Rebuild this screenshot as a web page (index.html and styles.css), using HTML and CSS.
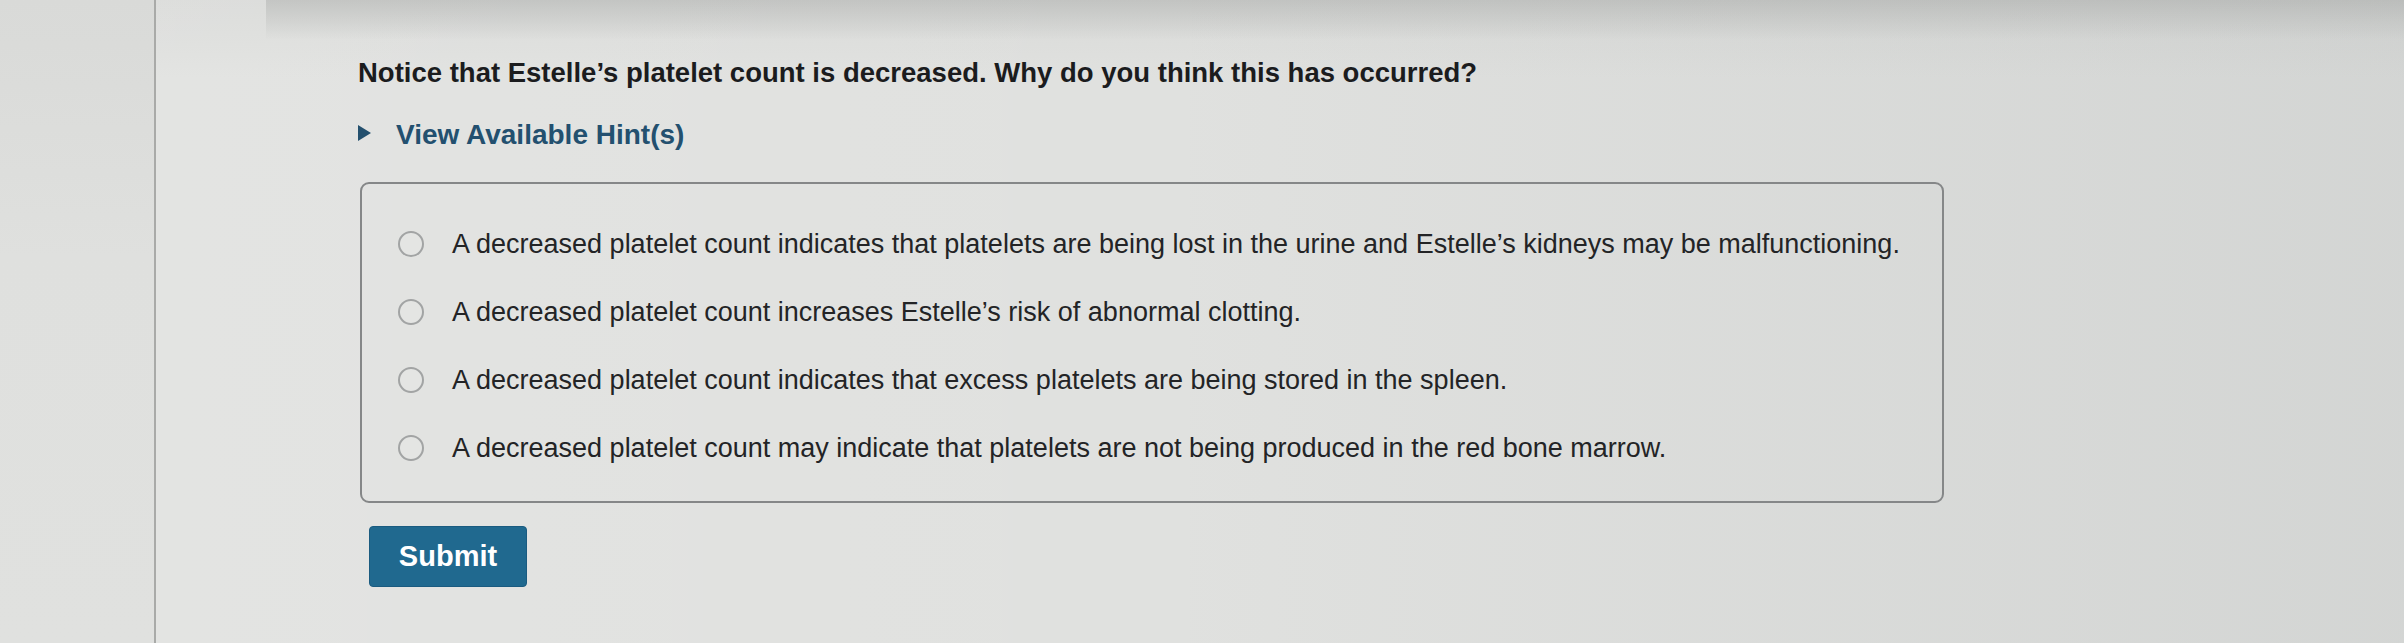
FILE: index.html
```html
<!DOCTYPE html>
<html lang="en">
<head>
<meta charset="utf-8">
<title>Question</title>
<link rel="stylesheet" href="styles.css">
</head>
<body>
<div class="page">
  <aside class="sidebar"></aside>
  <main class="main">
    <div class="topband"></div>
    <div class="content">
      <h1 class="question">Notice that Estelle’s platelet count is decreased. Why do you think this has occurred?</h1>
      <div class="hint"><span class="hint-arrow"></span><span class="hint-text">View Available Hint(s)</span></div>
      <div class="choices">
        <label class="choice"><span class="radio"></span><span class="choice-text">A decreased platelet count indicates that platelets are being lost in the urine and Estelle’s kidneys may be malfunctioning.</span></label>
        <label class="choice"><span class="radio"></span><span class="choice-text">A decreased platelet count increases Estelle’s risk of abnormal clotting.</span></label>
        <label class="choice"><span class="radio"></span><span class="choice-text">A decreased platelet count indicates that excess platelets are being stored in the spleen.</span></label>
        <label class="choice"><span class="radio"></span><span class="choice-text">A decreased platelet count may indicate that platelets are not being produced in the red bone marrow.</span></label>
      </div>
      <button class="submit" type="button">Submit</button>
    </div>
  </main>
</div>
</body>
</html>
```

FILE: styles.css
```css
html, body {
  margin: 0;
  padding: 0;
}

body {
  width: 2404px;
  height: 643px;
  overflow: hidden;
  font-family: "Liberation Sans", Arial, Helvetica, sans-serif;
  background: #dddedc;
}

.page {
  display: flex;
  height: 643px;
}

.sidebar {
  width: 154px;
  flex: none;
  background: linear-gradient(180deg, #d9dad8 0%, #dfe0de 40%, #e0e1df 100%);
  border-right: 2px solid #a9aaa8;
}

.main {
  flex: 1;
  display: flex;
  flex-direction: column;
  position: relative;
  background:
    linear-gradient(90deg, rgba(255,255,255,0.10) 0%, rgba(255,255,255,0.0) 45%, rgba(120,128,130,0.12) 100%),
    linear-gradient(180deg, #d9dad8 0%, #e0e1df 12%, #e0e1df 100%);
}

.topband {
  position: absolute;
  left: 110px;
  right: 0;
  top: 0;
  height: 40px;
  background: linear-gradient(180deg, rgba(160,162,160,0.40) 0%, rgba(175,177,175,0.25) 55%, rgba(200,202,200,0) 100%);
}

.content {
  position: relative;
  padding: 56px 0 0 202px;
  display: flex;
  flex-direction: column;
  align-items: flex-start;
}

.question {
  margin: 0;
  font-size: 27.5px;
  line-height: 34px;
  font-weight: bold;
  color: #1b1c1e;
}

.hint {
  margin-top: 28px;
  display: flex;
  align-items: center;
  gap: 25px;
  height: 34px;
  color: #23506f;
}

.hint-arrow {
  width: 0;
  height: 0;
  border-top: 8px solid transparent;
  border-bottom: 8px solid transparent;
  border-left: 13px solid #24506e;
  margin-top: -4px;
}

.hint-text {
  font-size: 28px;
  line-height: 34px;
  font-weight: bold;
}

.choices {
  margin-top: 30px;
  margin-left: 2px;
  width: 1584px;
  box-sizing: border-box;
  border: 2px solid #858788;
  border-radius: 9px;
  padding: 43px 30px 36px 36px;
  display: flex;
  flex-direction: column;
  gap: 34px;
}

.choice {
  display: flex;
  align-items: center;
  gap: 28px;
  height: 34px;
}

.radio {
  width: 22px;
  height: 22px;
  flex: none;
  border: 2px solid #a2a4a4;
  border-radius: 50%;
  background: #e4e5e3;
}

.choice-text {
  font-size: 27px;
  line-height: 34px;
  color: #232426;
  white-space: nowrap;
}

.submit {
  margin-top: 23px;
  margin-left: 11px;
  width: 158px;
  height: 61px;
  border: 1px solid #1a5b80;
  border-radius: 4px;
  background: #20698f;
  color: #ffffff;
  font-family: "Liberation Sans", Arial, Helvetica, sans-serif;
  font-size: 29px;
  font-weight: bold;
  padding: 0;
}
```
